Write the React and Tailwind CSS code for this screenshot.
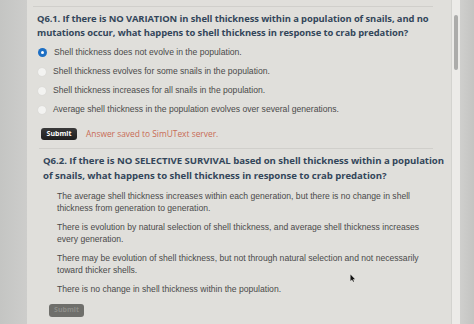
import React from "react";

const qFont = { fontFamily: '"Open Sans", "Liberation Sans", sans-serif' };
const oFont = { fontFamily: '"Liberation Sans", Arial, sans-serif' };

function Radio({ checked }) {
  if (checked) {
    return (
      <span className="flex h-[9px] w-[9px] shrink-0 items-center justify-center rounded-full bg-[#1d6fc4]">
        <span className="h-[3px] w-[3px] rounded-full bg-white" />
      </span>
    );
  }
  return <span className="h-[8px] w-[8px] shrink-0 rounded-full bg-[#f3f3f1] shadow-[0_0_1px_rgba(0,0,0,0.12)]" />;
}

function Option1({ checked, children }) {
  return (
    <div className="flex h-[19px] items-center gap-[7px]">
      <Radio checked={checked} />
      <span className="whitespace-nowrap text-[8.6px] text-[#4a4a4a]" style={oFont}>
        {children}
      </span>
    </div>
  );
}

function Option2({ children }) {
  return (
    <div className="flex items-start gap-[8px]">
      <span className="mt-[2px]">
        <Radio />
      </span>
      <span className="whitespace-nowrap text-[8.6px] leading-[12.5px] text-[#4a4a4a]" style={oFont}>
        {children}
      </span>
    </div>
  );
}

export default function App() {
  return (
    <div className="relative flex h-[324px] w-[474px] overflow-hidden bg-[#e0dfdb]">
      <div className="w-[27px] shrink-0 bg-gradient-to-r from-[#c4c5c3] to-[#cdcdcb]" />
      <div className="flex min-w-0 flex-1 flex-col">
        {/* Q6.1 */}
        <div className="ml-[6px] mr-[18px] mt-[6px] border-t border-[#d0cfcb]" />
        <div className="pl-[10px]">
          <p
            className="mt-[5px] whitespace-nowrap text-[9.4px] font-bold leading-[13.5px] tracking-[-0.08px] text-[#33465a]"
            style={qFont}
          >
            Q6.1. If there is NO VARIATION in shell thickness within a population of snails, and no
            <br />
            mutations occur, what happens to shell thickness in response to crab predation?
          </p>
          <div className="mt-[4px] flex flex-col pl-[1px]">
            <Option1 checked>Shell thickness does not evolve in the population.</Option1>
            <Option1>Shell thickness evolves for some snails in the population.</Option1>
            <Option1>Shell thickness increases for all snails in the population.</Option1>
            <Option1>Average shell thickness in the population evolves over several generations.</Option1>
          </div>
          <div className="mt-[9px] flex items-center gap-[9px] pl-[4px]">
            <span
              className="flex h-[12px] w-[36px] items-center justify-center rounded-[3px] bg-gradient-to-b from-[#3a3a3a] to-[#1f1f1f] text-[7px] font-bold text-white"
              style={qFont}
            >
              Submit
            </span>
            <span className="text-[8.4px] text-[#c86c56]" style={qFont}>
              Answer saved to SimUText server.
            </span>
          </div>
        </div>

        {/* Q6.2 */}
        <div className="ml-[12px] mr-[18px] mt-[7px] border-t border-[#d0cfcb]" />
        <div className="pl-[16px]">
          <p
            className="mt-[4px] whitespace-nowrap text-[9.6px] font-bold leading-[15px] tracking-[-0.05px] text-[#33465a]"
            style={qFont}
          >
            Q6.2. If there is NO SELECTIVE SURVIVAL based on shell thickness within a population
            <br />
            of snails, what happens to shell thickness in response to crab predation?
          </p>
          <div className="mt-[7px] flex flex-col gap-[6px] pl-[6px]">
            <Option2>
              The average shell thickness increases within each generation, but there is no change in shell
              <br />
              thickness from generation to generation.
            </Option2>
            <Option2>
              There is evolution by natural selection of shell thickness, and average shell thickness increases
              <br />
              every generation.
            </Option2>
            <Option2>
              There may be evolution of shell thickness, but not through natural selection and not necessarily
              <br />
              toward thicker shells.
            </Option2>
            <Option2>There is no change in shell thickness within the population.</Option2>
          </div>
          <div className="mt-[9px] pl-[6px]">
            <span
              className="flex h-[12.5px] w-[35px] items-center justify-center rounded-[3px] bg-[#6f6f6b] text-[7px] font-bold text-[#8e8e8a]"
              style={qFont}
            >
              Submit
            </span>
          </div>
        </div>
      </div>
      {/* scrollbar */}
      <div className="flex w-[9px] shrink-0 justify-center border-l border-[#d3d3cf] bg-[#ecebe8] pt-[15px]">
        <div className="h-[55px] w-[4px] rounded-full bg-[#acacaa]" />
      </div>
      <div className="w-[14px] shrink-0 bg-gradient-to-r from-[#cfcfcd] to-[#c4c4c2]" />

      {/* mouse cursor */}
      <svg className="absolute left-[350px] top-[274px]" width="6" height="8" viewBox="0 0 6 8">
        <path d="M0.5 0.5 L0.5 7 L2 5.5 L3.2 7.8 L4 7.4 L2.9 5.2 L5 5.2 Z" fill="#111" />
      </svg>
    </div>
  );
}
